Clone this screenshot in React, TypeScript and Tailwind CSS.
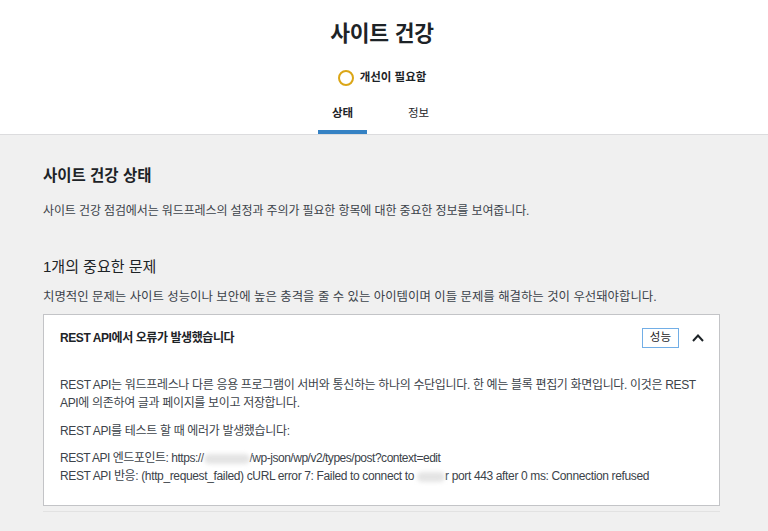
import React from "react";

const font = { fontFamily: '"Liberation Sans", "Noto Sans CJK KR", sans-serif' };

function Blur({ w }: { w: number }) {
  return (
    <span
      className="inline-block h-[10px] align-middle rounded-full bg-[#e4e4e4] blur-[2px]"
      style={{ width: w }}
    />
  );
}

export default function App() {
  return (
    <div className="w-[768px] h-[531px] bg-[#f0f0f0] text-[#1d2327] overflow-hidden" style={font}>
      <header className="bg-white border-b border-[#dcdcde] h-[135px] flex flex-col items-center">
        <h1 className="mt-[21px] text-[21.5px] leading-[26px] font-bold tracking-[-0.01em] text-[#1d2327] mr-[4px]">사이트 건강</h1>
        <div className="mt-[22px] flex items-center gap-[6px] h-[18px] mr-[4px]">
          <span className="w-[16px] h-[16px] rounded-full border-[2px] border-[#dba617]" />
          <span className="text-[11.5px] font-semibold text-[#1d2327]">개선이 필요함</span>
        </div>
        <nav className="mt-auto flex gap-[27px] mr-[7px]">
          <div className="w-[49px] h-[40px] flex items-center justify-center text-[11.5px] font-semibold border-b-[4px] border-[#3582c4] pt-[4px]">
            상태
          </div>
          <div className="w-[49px] h-[40px] flex items-center justify-center text-[11.5px] text-[#1d2327] pt-[4px] border-b-[4px] border-transparent">
            정보
          </div>
        </nav>
      </header>

      <main className="ml-[43px] w-[677px]">
        <h2 className="mt-[30px] text-[15.5px] leading-[22px] font-semibold text-[#1d2327]">사이트 건강 상태</h2>
        <p className="mt-[15px] text-[12px] leading-[18px] tracking-[-0.01em] text-[#3c434a]">
          사이트 건강 점검에서는 워드프레스의 설정과 주의가 필요한 항목에 대한 중요한 정보를 보여줍니다.
        </p>
        <h3 className="mt-[36px] text-[15px] leading-[22px] font-normal text-[#1d2327]">1개의 중요한 문제</h3>
        <p className="mt-[10px] text-[12.4px] leading-[18px] text-[#3c434a] whitespace-nowrap">
          치명적인 문제는 사이트 성능이나 보안에 높은 충격을 줄 수 있는 아이템이며 이들 문제를 해결하는 것이 우선돼야합니다.
        </p>

        <section className="mt-[8px] bg-white border border-[#c3c4c7] h-[192px]">
          <div className="h-[45px] flex items-center pl-[16px] pr-[14px]">
            <span className="text-[12px] font-semibold tracking-[-0.035em] text-[#1d2327]">REST API에서 오류가 발생했습니다</span>
            <span className="ml-auto h-[20px] px-[7px] flex items-center border border-[#72aee6] text-[11.5px] text-[#1d2327]">
              성능
            </span>
            <svg className="ml-[12px]" width="14" height="14" viewBox="0 0 14 14">
              <path d="M2 10 L7 4.5 L12 10" fill="none" stroke="#1d2327" strokeWidth="2" />
            </svg>
          </div>
          <div className="pl-[16px] pr-[8px] pt-[16px] text-[12px] leading-[18px] text-[#3c434a] whitespace-nowrap">
            <p className="tracking-[-0.028em]">
              REST API는 워드프레스나 다른 응용 프로그램이 서버와 통신하는 하나의 수단입니다. 한 예는 블록 편집기 화면입니다. 이것은 REST
              <br />
              API에 의존하여 글과 페이지를 보이고 저장합니다.
            </p>
            <p className="mt-[10px] tracking-[-0.028em]">REST API를 테스트 할 때 에러가 발생했습니다:</p>
            <p className="mt-[9px]">
              <span className="tracking-[-0.04em]">
                REST API 엔드포인트: https://<Blur w={46} />/wp-json/wp/v2/types/post?context=edit
              </span>
              <br />
              <span className="tracking-[-0.03em]">
                REST API 반응: (http_request_failed) cURL error 7: Failed to connect to <Blur w={28} />r port 443 after 0 ms: Connection refused
              </span>
            </p>
          </div>
        </section>
        <div className="mt-[5px] h-px bg-[#e2e2e2]" />
      </main>
    </div>
  );
}
